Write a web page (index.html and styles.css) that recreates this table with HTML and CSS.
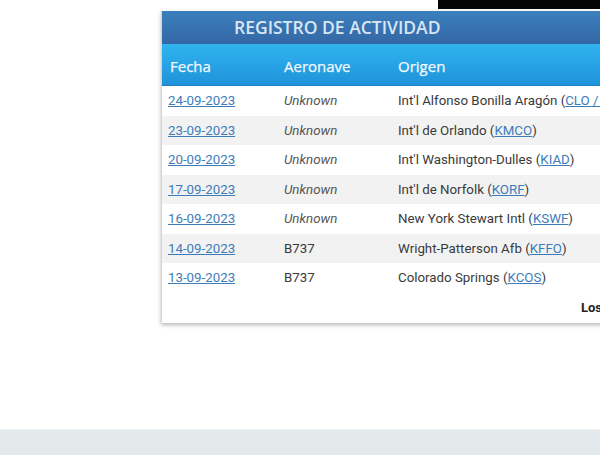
FILE: index.html
```html
<!DOCTYPE html>
<html lang="es">
<head>
<meta charset="utf-8">
<link rel="stylesheet" href="styles.css">
</head>
<body>
<div class="page">
  <div class="topbar"><div class="media"></div></div>
  <section class="panel">
    <h2 class="title">REGISTRO DE ACTIVIDAD</h2>
    <table class="log">
      <thead>
        <tr><th class="c1">Fecha</th><th class="c2">Aeronave</th><th class="c3">Origen</th></tr>
      </thead>
      <tbody>
        <tr><td><a href="#">24-09-2023</a></td><td class="unk">Unknown</td><td>Int'l Alfonso Bonilla Aragón (<a href="#">CLO / SKCL</a>)</td></tr>
        <tr><td><a href="#">23-09-2023</a></td><td class="unk">Unknown</td><td>Int'l de Orlando (<a href="#">KMCO</a>)</td></tr>
        <tr><td><a href="#">20-09-2023</a></td><td class="unk">Unknown</td><td>Int'l Washington-Dulles (<a href="#">KIAD</a>)</td></tr>
        <tr><td><a href="#">17-09-2023</a></td><td class="unk">Unknown</td><td>Int'l de Norfolk (<a href="#">KORF</a>)</td></tr>
        <tr><td><a href="#">16-09-2023</a></td><td class="unk">Unknown</td><td>New York Stewart Intl (<a href="#">KSWF</a>)</td></tr>
        <tr><td><a href="#">14-09-2023</a></td><td>B737</td><td>Wright-Patterson Afb (<a href="#">KFFO</a>)</td></tr>
        <tr><td><a href="#">13-09-2023</a></td><td>B737</td><td>Colorado Springs (<a href="#">KCOS</a>)</td></tr>
      </tbody>
    </table>
    <div class="foot"><span>Los últimos 7 vuelos</span></div>
  </section>
  <div class="spacer"></div>
  <footer class="band"></footer>
</div>
</body>
</html>
```
FILE: styles.css
```css
html, body {
  margin: 0;
  padding: 0;
  background: #fff;
  overflow: hidden;
}
.page {
  width: 600px;
  height: 455px;
  display: flex;
  flex-direction: column;
  overflow: hidden;
}
.topbar {
  display: flex;
  justify-content: flex-end;
  height: 9px;
  flex: none;
}
.media {
  width: 162px;
  height: 9px;
  background: #050505;
}
.panel {
  flex: none;
  margin: 2px 0 0 161px;
  width: 480px;
  background: #fff;
  border-left: 1px solid #d6d6d6;
  box-shadow: 0 2px 4px rgba(0,0,0,0.28);
}
.title {
  margin: 0;
  height: 33px;
  line-height: 33px;
  padding-left: 72px;
  font-family: "Open Sans", sans-serif;
  font-weight: 600;
  font-size: 17.5px;
  color: #d9e6f4;
  background: linear-gradient(#3c7fbd, #3467a5);
}
.log {
  border-collapse: collapse;
  width: 100%;
  table-layout: fixed;
}
.log th {
  height: 38px;
  padding: 3px 0 0 0;
  text-align: left;
  font-family: "Open Sans", sans-serif;
  font-weight: 500;
  font-size: 15px;
  color: #f4f9ff;
  background: linear-gradient(#30b4f0, #1f93da);
  border-bottom: 1px solid #1a7fc4;
  -webkit-text-stroke: 0.25px #f4f9ff;
}
.log th.c1 { width: 114px; padding-left: 8px; }
.log th.c2 { width: 114px; }
.log td {
  height: 29.5px;
  padding: 0;
  font-family: Roboto, sans-serif;
  font-size: 13.3px;
  color: #3a3a3a;
  white-space: nowrap;
  overflow: hidden;
}
.log td:first-child { padding-left: 6px; }
.log tbody tr:nth-child(even) td { background: #f2f2f2; }
.log td.unk { font-style: italic; color: #555; }
.log a {
  color: #3d7cb8;
  text-decoration: underline;
}
.foot {
  height: 30px;
  display: flex;
  align-items: center;
  padding-left: 419px;
  font-family: Roboto, sans-serif;
  font-weight: 700;
  font-size: 13px;
  color: #222;
  white-space: nowrap;
}
.spacer { flex: 1; }
.band {
  flex: none;
  height: 25px;
  background: #e4e9ec;
  border-top: 1px solid #eef1f3;
}
```
